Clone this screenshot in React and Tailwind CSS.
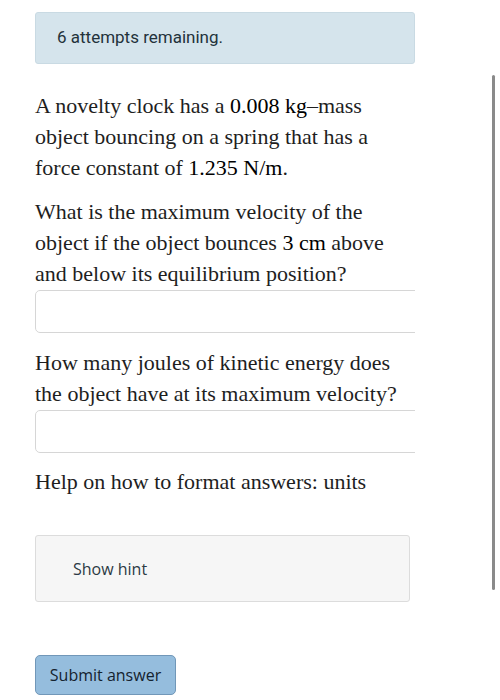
export default function App() {
  const serif = { fontFamily: '"Liberation Serif", "DejaVu Serif", serif' };
  return (
    <div className="relative w-[500px] h-[700px] bg-white overflow-hidden">
      <div className="absolute left-[492px] top-[75px] w-[3px] h-[515px] bg-[#8a8a8a] rounded-sm" />
      <div className="pl-[35px] pt-[12px] w-[415px]">
        <div className="h-[52px] rounded-[3px] bg-[#d5e4ec] border border-[#c9dae3] flex items-center pl-[21px] text-[17px] text-[#23323b] font-['Roboto',sans-serif]">
          6 attempts remaining.
        </div>
        <div className="text-[22px] leading-[31px] text-[#1e1e1e] mt-[26px] whitespace-nowrap" style={serif}>
          <p>
            A novelty clock has a <span className="text-black">0.008 kg</span>–mass
            <br />
            object bouncing on a spring that has a
            <br />
            force constant of <span className="text-black">1.235 N/m</span>.
          </p>
          <p className="mt-[13px]">
            What is the maximum velocity of the
            <br />
            object if the object bounces <span className="text-black">3 cm</span> above
            <br />
            and below its equilibrium position?
          </p>
          <div className="mt-[1px] h-[43px] overflow-hidden">
            <div className="h-[43px] w-[420px] rounded-[5px] border border-[#d6d6d6]" />
          </div>
          <p className="mt-[14px]">
            How many joules of kinetic energy does
            <br />
            the object have at its maximum velocity?
          </p>
          <div className="mt-[1px] h-[43px] overflow-hidden">
            <div className="h-[43px] w-[420px] rounded-[5px] border border-[#d6d6d6]" />
          </div>
          <p className="mt-[13px]">Help on how to format answers: units</p>
        </div>
        <div className="mt-[38px] w-[375px] h-[67px] rounded-[3px] bg-[#f6f6f6] border border-[#dcdcdc] flex items-center pl-[37px] text-[16px] text-[#2c3a44] font-['Open_Sans',sans-serif]">
          Show hint
        </div>
        <button className="mt-[53px] w-[141px] h-[40px] rounded-[5px] bg-[#95bddd] border border-[#7197b8] text-[16px] text-[#14222e] font-['Open_Sans',sans-serif] flex items-center justify-center">
          Submit answer
        </button>
      </div>
    </div>
  );
}
